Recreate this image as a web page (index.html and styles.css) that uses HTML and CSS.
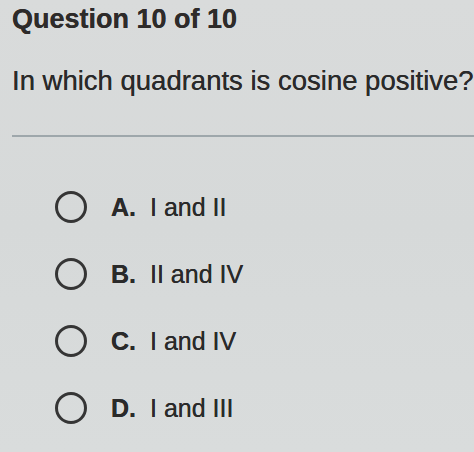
FILE: index.html
```html
<!DOCTYPE html>
<html>
<head>
<meta charset="utf-8">
<link rel="stylesheet" href="styles.css">
</head>
<body>
<div class="page">
  <h1 class="title">Question 10 of 10</h1>
  <p class="question">In which quadrants is cosine positive?</p>
  <div class="divider"></div>
  <ul class="options">
    <li class="option"><span class="radio"></span><span class="label"><b class="letter">A.</b>I and II</span></li>
    <li class="option"><span class="radio"></span><span class="label"><b class="letter">B.</b>II and IV</span></li>
    <li class="option"><span class="radio"></span><span class="label"><b class="letter">C.</b>I and IV</span></li>
    <li class="option"><span class="radio"></span><span class="label"><b class="letter">D.</b>I and III</span></li>
  </ul>
</div>
</body>
</html>
```
FILE: styles.css
```css
html, body {
  margin: 0;
  padding: 0;
}
body {
  width: 474px;
  height: 452px;
  overflow: hidden;
  background: linear-gradient(180deg, #d9dbdb 0%, #d6d9d9 50%, #d9dcdc 100%);
  font-family: "Liberation Sans", Arial, sans-serif;
  color: #2b2b2b;
}
.page {
  padding: 0 0 0 12px;
}
.title {
  margin: 0;
  padding-top: 3px;
  font-size: 27px;
  line-height: 32px;
  font-weight: bold;
  color: #2e2b2a;
  text-shadow: 0 0 0.6px #2e2b2a;
}
.question {
  margin: 0;
  padding-top: 30px;
  font-size: 27.5px;
  line-height: 32px;
  color: #2a2a2a;
  white-space: nowrap;
  text-shadow: 0 0 0.5px #2a2a2a;
}
.divider {
  margin-top: 38px;
  height: 2px;
  background: #9ea7ab;
}
.options {
  list-style: none;
  margin: 0;
  padding: 54px 0 0 43px;
  display: flex;
  flex-direction: column;
  gap: 35px;
}
.option {
  display: flex;
  align-items: center;
  height: 32px;
}
.radio {
  width: 26px;
  height: 26px;
  border: 3px solid #353535;
  border-radius: 50%;
  flex: none;
}
.label {
  margin-left: 24px;
  font-size: 25px;
  line-height: 32px;
  color: #2a2a2a;
  text-shadow: 0 0 0.5px #2a2a2a;
}
.letter {
  font-weight: bold;
  margin-right: 14px;
}
```
